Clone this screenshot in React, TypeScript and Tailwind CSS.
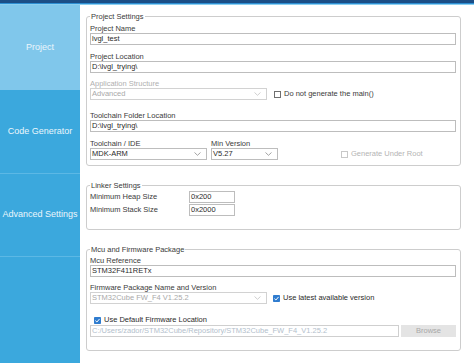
import React from 'react'

const font = "font-['Liberation_Sans',Arial,sans-serif]"

function Chevron({ faded }: { faded?: boolean }) {
  return (
    <svg width="7" height="4" viewBox="0 0 7 4" className="shrink-0">
      <path d="M0.5 0.5 L3.5 3.3 L6.5 0.5" fill="none" stroke={faded ? '#c4c4c4' : '#8c8c8c'} strokeWidth="0.8" />
    </svg>
  )
}

function Box({ checked, faded }: { checked?: boolean; faded?: boolean }) {
  if (checked) {
    return (
      <svg width="7" height="7" viewBox="0 0 7 7" className="shrink-0">
        <rect x="0" y="0" width="7" height="7" rx="0.8" fill="#2f7ccf" />
        <path d="M1.4 3.6 L2.9 5 L5.6 1.9" fill="none" stroke="#fff" strokeWidth="1" />
      </svg>
    )
  }
  return (
    <span
      className={
        'block w-[7px] h-[7px] shrink-0 border bg-white ' +
        (faded ? 'border-[#c8c8c8]' : 'border-[#6f6f6f]')
      }
    />
  )
}

function Field({ value, className = '' }: { value: string; className?: string }) {
  return (
    <div className={'h-[12px] border border-[#bdbdbd] bg-white px-[1px] flex items-center text-[#2a2a2a] ' + className}>
      {value}
    </div>
  )
}

function Select({ value, faded, className = '' }: { value: string; faded?: boolean; className?: string }) {
  return (
    <div
      className={
        'h-[12px] border bg-white pl-[1px] pr-[5px] flex items-center justify-between ' +
        (faded ? 'border-[#d2d2d2] text-[#a9a9a9] ' : 'border-[#bdbdbd] text-[#2a2a2a] ') +
        className
      }
    >
      <span>{value}</span>
      <Chevron faded={faded} />
    </div>
  )
}

function Group({ title, children, className = '' }: { title: string; children: React.ReactNode; className?: string }) {
  return (
    <fieldset className={'border border-[#cdcdcd] rounded-[3px] pl-[3px] pr-[4px] ' + className}>
      <legend className="px-[1px] leading-[9px] text-[#3a3a3a]">{title}</legend>
      {children}
    </fieldset>
  )
}

function Label({ children, faded, className = '' }: { children: React.ReactNode; faded?: boolean; className?: string }) {
  return (
    <div className={'leading-[9px] ' + (faded ? 'text-[#b0b0b0] ' : 'text-[#3a3a3a] ') + className}>{children}</div>
  )
}

export default function App() {
  return (
    <div className={'w-[474px] h-[363px] overflow-hidden bg-white flex flex-col ' + font}>
      <div className="h-[3px] bg-[#1b4e86]" />
      <div className="h-[1px] bg-[#2d8fd3]" />
      <div className="h-[1px] bg-[#8ccff0]" />

      <div className="flex flex-1">
        <div className="w-[80px] bg-[#3ba8dd] flex flex-col text-[9px] text-[#eaf6fc]">
          <div className="h-[85px] bg-[#80c7eb] flex items-center justify-center">Project</div>
          <div className="h-[83px] flex items-center justify-center">Code Generator</div>
          <div className="h-[84px] border-y border-[#5cb8e5] flex items-center justify-center">
            Advanced Settings
          </div>
        </div>

        <div className="flex-1 pl-[6px] pr-[13px] pt-[7px] text-[7.5px] flex flex-col">
          <Group title="Project Settings" className="pb-[5px]">
            <Label className="mt-[3px]">Project Name</Label>
            <Field value="lvgl_test" />
            <Label className="mt-[7px]">Project Location</Label>
            <Field value="D:\lvgl_trying\" />
            <Label faded className="mt-[6px]">Application Structure</Label>
            <div className="flex items-center">
              <Select value="Advanced" faded className="w-[177px]" />
              <div className="ml-[7px] flex items-center gap-[3px] text-[#3a3a3a]">
                <Box />
                <span>Do not generate the main()</span>
              </div>
            </div>
            <Label className="mt-[11px]">Toolchain Folder Location</Label>
            <Field value="D:\lvgl_trying\" />
            <div className="mt-[7px] flex items-end">
              <div className="w-[117px]">
                <Label>Toolchain / IDE</Label>
                <Select value="MDK-ARM" />
              </div>
              <div className="ml-[4px] w-[67px]">
                <Label>Min Version</Label>
                <Select value="V5.27" />
              </div>
              <div className="ml-[63px] h-[12px] flex items-center gap-[3px] text-[#b4b4b4]">
                <Box faded />
                <span>Generate Under Root</span>
              </div>
            </div>
          </Group>

          <Group title="Linker Settings" className="mt-[15px] pb-[13px]">
            <div className="mt-[1px] flex items-center">
              <span className="w-[99px] text-[#3a3a3a]">Minimum Heap Size</span>
              <Field value="0x200" className="w-[46px]" />
            </div>
            <div className="mt-[1px] flex items-center">
              <span className="w-[99px] text-[#3a3a3a]">Minimum Stack Size</span>
              <Field value="0x2000" className="w-[46px]" />
            </div>
          </Group>

          <Group title="Mcu and Firmware Package" className="mt-[15px] pb-[13px]">
            <Label className="mt-[2px]">Mcu Reference</Label>
            <Field value="STM32F411RETx" />
            <Label className="mt-[6px]">Firmware Package Name and Version</Label>
            <div className="flex items-center">
              <Select value="STM32Cube FW_F4 V1.25.2" faded className="w-[177px]" />
              <div className="ml-[6px] flex items-center gap-[3px] text-[#2a2a2a]">
                <Box checked />
                <span>Use latest available version</span>
              </div>
            </div>
            <div className="mt-[11px] ml-[4px] h-[10px] flex items-center gap-[3px] text-[#2a2a2a]">
              <Box checked />
              <span>Use Default Firmware Location</span>
            </div>
            <div className="flex items-center gap-[2px]">
              <div className="w-[309px] h-[12px] border border-[#cfcfcf] bg-white px-[1px] flex items-center text-[#b3c0cc] overflow-hidden whitespace-nowrap">
                C:/Users/zador/STM32Cube/Repository/STM32Cube_FW_F4_V1.25.2
              </div>
              <div className="flex-1 h-[12px] bg-[#e4e4e4] flex items-center justify-center text-[#a8a8a8]">
                Browse
              </div>
            </div>
          </Group>
        </div>
      </div>
    </div>
  )
}
